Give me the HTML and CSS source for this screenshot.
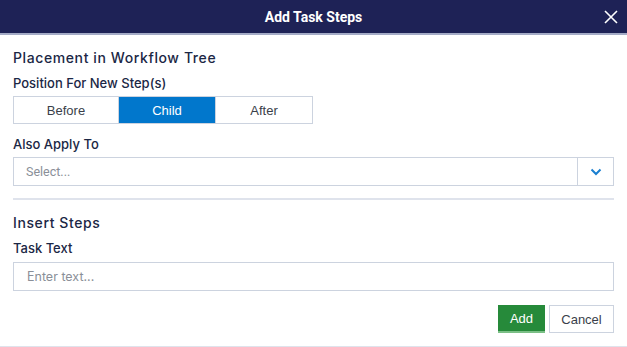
FILE: index.html
```html
<!DOCTYPE html>
<html>
<head>
  <title>Add Task Steps</title>
  <link rel="stylesheet" href="styles.css">
</head>
<body>
  <div class="dialog">
    <div class="dialog-header">
      <span class="dialog-title">Add Task Steps</span>
      <span class="close-btn">
        <svg width="14" height="14" viewBox="0 0 14 14"><path d="M1 1 L13 13 M13 1 L1 13" stroke="#fff" stroke-width="1.6" fill="none"/></svg>
      </span>
    </div>

    <div class="dialog-body">
      <h3 class="section-title">Placement in Workflow Tree</h3>
      <label class="field-label">Position For New Step(s)</label>
      <div class="segmented">
        <button class="seg-btn seg-before">Before</button>
        <button class="seg-btn seg-child active">Child</button>
        <button class="seg-btn seg-after">After</button>
      </div>

      <label class="field-label">Also Apply To</label>
      <div class="select-box">
        <span class="select-placeholder">Select...</span>
        <span class="select-arrow">
          <svg width="12" height="8" viewBox="0 0 12 8"><path d="M1.5 1.5 L6 6 L10.5 1.5" stroke="#1a7fd0" stroke-width="2" fill="none"/></svg>
        </span>
      </div>

      <div class="divider"></div>

      <h3 class="section-title">Insert Steps</h3>
      <label class="field-label label-tight" for="taskText">Task Text</label>
      <input type="text" id="taskText" class="text-input" placeholder="Enter text...">

      <div class="actions">
        <button class="btn btn-add">Add</button>
        <button class="btn btn-cancel">Cancel</button>
      </div>
    </div>
  </div>
</body>
</html>
```

FILE: styles.css
```css
body {
  margin: 0;
  background-color: #fff;
  font-family: Inter, "Noto Sans", sans-serif;
}

.dialog {
  width: 627px;
  height: 347px;
  border-bottom: 1px solid #dfe3ec;
  box-sizing: border-box;
}

.dialog-header {
  height: 33px;
  background-color: #1e2256;
  border-bottom: 2px solid #a4abc6;
  display: flex;
  align-items: center;
  justify-content: center;
  position: relative;
}

.dialog-title {
  color: #fff;
  font-family: Roboto, "Liberation Sans", sans-serif;
  font-weight: bold;
  font-size: 14px;
}

.close-btn {
  position: absolute;
  right: 9px;
  top: 10px;
  display: flex;
}

.dialog-body {
  padding: 0 13px;
}

.section-title {
  margin: 14px 0 0;
  font-size: 14px;
  font-weight: 500;
  color: #1b2745;
  letter-spacing: 0.6px;
  line-height: 17px;
}

.field-label {
  display: block;
  margin-top: 9px;
  margin-bottom: 5px;
  font-size: 13px;
  font-weight: 500;
  color: #1b2745;
  line-height: 16px;
}

.label-tight {
  margin-bottom: 6px;
}

.segmented {
  display: flex;
  width: 300px;
  height: 28px;
  border: 1px solid #ccd3df;
  box-sizing: border-box;
  margin-bottom: 12px;
}

.seg-btn {
  border: none;
  background-color: #fff;
  font-family: "Liberation Sans", Arial, sans-serif;
  font-size: 13px;
  color: #3a3f4a;
  padding: 0;
}

.seg-before {
  width: 104px;
}

.seg-child {
  width: 98px;
}

.seg-after {
  flex: 1;
}

.seg-btn.active {
  background-color: #0177cc;
  color: #fff;
  border-left: 1px solid #ccd3df;
  border-right: 1px solid #ccd3df;
}

.select-box {
  display: flex;
  height: 29px;
  border: 1px solid #ccd3df;
  box-sizing: border-box;
}

.select-placeholder {
  flex: 1;
  display: flex;
  align-items: center;
  padding-left: 12px;
  font-family: Roboto, sans-serif;
  font-size: 12.5px;
  color: #8a8f98;
}

.select-arrow {
  width: 35px;
  border-left: 1px solid #ccd3df;
  display: flex;
  align-items: center;
  justify-content: center;
}

.divider {
  height: 2px;
  background-color: #dfe3ec;
  margin-top: 12px;
}

.text-input {
  display: block;
  width: 100%;
  height: 29px;
  border: 1px solid #ccd3df;
  border-radius: 0;
  box-sizing: border-box;
  padding: 0 13px;
  font-family: Inter, sans-serif;
  font-size: 12.5px;
  color: #333;
  outline: none;
}

.text-input::placeholder {
  color: #8a8f98;
}

.actions {
  display: flex;
  justify-content: flex-end;
  gap: 4px;
  margin-top: 14px;
}

.btn {
  height: 28px;
  font-family: "Liberation Sans", Arial, sans-serif;
  font-size: 13px;
  padding: 0;
  border-radius: 0;
}

.btn-add {
  width: 47px;
  background-color: #268a3a;
  color: #fff;
  border: none;
  border-bottom: 2px solid #7bbf86;
}

.btn-cancel {
  width: 65px;
  background-color: #fff;
  color: #3a3f4a;
  border: 1px solid #ccd3df;
}
```
